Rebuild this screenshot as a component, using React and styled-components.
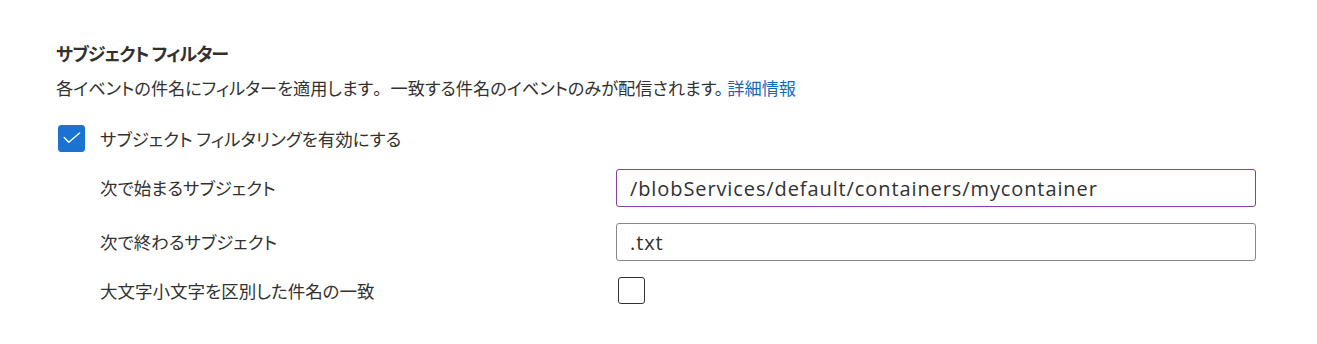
import React from 'react';
import styled, { createGlobalStyle } from 'styled-components';

// Global
const GlobalStyle = createGlobalStyle`
    body {
        margin: 0;
        background: #ffffff;
        font-family: "Noto Sans CJK JP", "Noto Sans", sans-serif;
        color: #323130;
    }
`;

// Styles
const Section = styled.section`
    padding: 39px 0 0 56px;
    width: 1200px;
`;

const Heading = styled.h2`
    margin: 0;
    font-size: 18px;
    line-height: 28px;
    font-weight: 700;
    letter-spacing: -1px;
    font-feature-settings: "palt";
    color: #323130;
`;

const Desc = styled.p`
    margin: 9px 0 0;
    font-size: 17.2px;
    line-height: 24px;
    font-feature-settings: "palt";
`;

const Stop = styled.span`
    font-feature-settings: normal;
`;

const Link = styled.a`
    color: #0f6cbd;
    text-decoration: none;
    margin-left: 4px;
`;

const CheckRow = styled.label`
    display: flex;
    align-items: center;
    gap: 15px;
    margin-top: 24px;
    height: 28px;
    margin-left: 2px;
    font-size: 17.5px;
    font-feature-settings: "palt";
`;

const Box = styled.span`
    width: 27px;
    height: 27px;
    box-sizing: border-box;
    border-radius: 3px;
    display: flex;
    align-items: center;
    justify-content: center;
    flex-shrink: 0;
    background: ${p => (p.checked ? '#1a73d0' : '#ffffff')};
    border: 1px solid ${p => (p.checked ? '#1a73d0' : '#323130')};
`;

const Rows = styled.div`
    display: grid;
    grid-template-columns: 516px 640px;
    row-gap: 16px;
    margin: 17px 0 0 44px;
    align-items: center;
`;

const Label = styled.span`
    font-size: 17.5px;
    line-height: 24px;
    font-feature-settings: "palt";
`;

const Input = styled.div`
    height: 38px;
    box-sizing: border-box;
    border: 1px solid ${p => (p.focused ? '#8a3ea0' : '#8a8886')};
    border-radius: 3px;
    display: flex;
    align-items: center;
    padding: 0 13px;
    font-family: "Open Sans", "Noto Sans", sans-serif;
    font-size: 20px;
    letter-spacing: 0.9px;
    color: #323130;
`;

const BoxCell = styled.div`
    padding-left: 2px;
    display: flex;
`;

const Check = () => (
    <svg width="18" height="12" viewBox="0 0 18 12">
        <path d="M1.2 5.6 L5.8 10.2 L16.6 1" fill="none" stroke="#fff" strokeWidth="1.4" strokeLinecap="round" strokeLinejoin="round" />
    </svg>
);

const App = () => (
    <>
        <GlobalStyle />
        <Section>
            <Heading>サブジェクト フィルター</Heading>
            <Desc>
                各イベントの件名にフィルターを適用します<Stop>。</Stop>一致する件名のイベントのみが配信されます。
                <Link href="#">詳細情報</Link>
            </Desc>

            <CheckRow>
                <Box checked><Check /></Box>
                サブジェクト フィルタリングを有効にする
            </CheckRow>

            <Rows>
                <Label>次で始まるサブジェクト</Label>
                <Input focused>/blobServices/default/containers/mycontainer</Input>

                <Label>次で終わるサブジェクト</Label>
                <Input>.txt</Input>

                <Label>大文字小文字を区別した件名の一致</Label>
                <BoxCell><Box /></BoxCell>
            </Rows>
        </Section>
    </>
);

export default App;
